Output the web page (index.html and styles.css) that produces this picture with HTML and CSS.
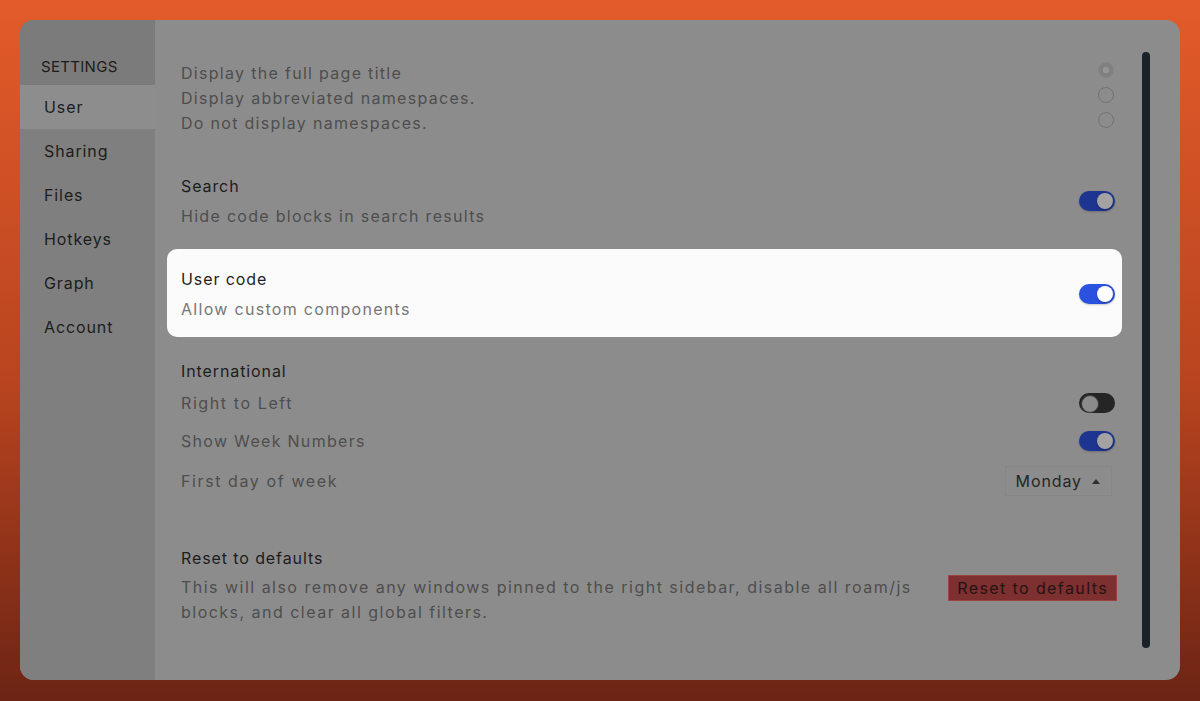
FILE: index.html
```html
<!DOCTYPE html>
<html lang="en">

<head>
    <meta charset="UTF-8">
    <meta name="viewport" content="width=device-width, initial-scale=1.0">
    <title>Settings - User</title>
    <link rel="stylesheet" href="styles.css">
</head>

<body>
    <div class="window">
        <div class="sidebar">
            <div class="side-title">SETTINGS</div>
            <div class="side-item active">User</div>
            <div class="side-item">Sharing</div>
            <div class="side-item">Files</div>
            <div class="side-item">Hotkeys</div>
            <div class="side-item">Graph</div>
            <div class="side-item">Account</div>
        </div>

        <div class="main">
            <div class="list">
                <div class="section radios">
                    <div class="row line">
                        <span class="desc">Display the full page title</span>
                        <span class="radio checked"></span>
                    </div>
                    <div class="row line">
                        <span class="desc">Display abbreviated namespaces.</span>
                        <span class="radio"></span>
                    </div>
                    <div class="row line">
                        <span class="desc">Do not display namespaces.</span>
                        <span class="radio"></span>
                    </div>
                </div>

                <div class="section search">
                    <div class="row">
                        <div>
                            <div class="title">Search</div>
                            <div class="desc">Hide code blocks in search results</div>
                        </div>
                        <span class="toggle on"></span>
                    </div>
                </div>

                <div class="section card">
                    <div class="row">
                        <div>
                            <div class="title">User code</div>
                            <div class="desc">Allow custom components</div>
                        </div>
                        <span class="toggle on bright"></span>
                    </div>
                </div>

                <div class="section intl">
                    <div class="title">International</div>
                    <div class="row opt rtl">
                        <span class="desc">Right to Left</span>
                        <span class="toggle off"></span>
                    </div>
                    <div class="row opt weeks">
                        <span class="desc">Show Week Numbers</span>
                        <span class="toggle on"></span>
                    </div>
                    <div class="row opt firstday">
                        <span class="desc">First day of week</span>
                        <span class="select">Monday <span class="caret"></span></span>
                    </div>
                </div>

                <div class="section reset">
                    <div class="title">Reset to defaults</div>
                    <div class="reset-row">
                        <div class="desc long">This will also remove any windows pinned to the right sidebar, disable all roam/js blocks, and clear all global filters.</div>
                        <button class="reset-btn">Reset to defaults</button>
                    </div>
                </div>
            </div>
            <div class="scrollbar"></div>
        </div>
    </div>
</body>

</html>
```

FILE: styles.css
```css
* {
    margin: 0px;
    padding: 0px;
    box-sizing: border-box;
}

body {
    height: 701px;
    padding: 20px;
    background: linear-gradient(180deg, #e35b2a 0%, #b8441f 55%, #6c2414 100%);
    font-family: Inter, "Noto Sans", sans-serif;
    font-size: 16px;
    letter-spacing: 0.9px;
    overflow: hidden;
}

.window {
    height: 660px;
    display: flex;
    background-color: #8c8c8c;
    border-radius: 14px;
    overflow: hidden;
}

/* sidebar */

.sidebar {
    width: 135px;
    background-color: #7f7f7f;
}

.side-title {
    height: 65px;
    padding: 35px 0 0 21px;
    background-color: #7b7b7b;
    color: #1c1c1c;
    font-size: 15px;
    letter-spacing: 0.3px;
    line-height: 24px;
}

.side-item {
    height: 44px;
    line-height: 44px;
    padding-left: 24px;
    color: #1c1c1c;
}

.side-item.active {
    background-color: #8d8d8d;
}

/* main area */

.main {
    flex: 1;
    display: flex;
    gap: 20px;
    padding: 0 30px 0 12px;
}

.list {
    flex: 1;
    padding-top: 40px;
}

.scrollbar {
    width: 8px;
    margin-top: 32px;
    height: 596px;
    border-radius: 4px;
    background-color: #1b2129;
}

.row {
    display: flex;
    justify-content: space-between;
    align-items: center;
}

.section {
    padding: 0 7px 0 14px;
}

.title {
    line-height: 24px;
    color: #1c1c1c;
}

.desc {
    line-height: 24px;
    color: #4e4e4e;
    letter-spacing: 1.3px;
}

.line {
    height: 25px;
}

.search {
    margin-top: 39px;
}

.search .desc,
.card .desc {
    margin-top: 6px;
}

.card {
    margin-top: 21px;
    padding-top: 18px;
    padding-bottom: 16px;
    background-color: #fbfbfb;
    border-radius: 10px;
}

.card .title {
    color: #1f1f1f;
}

.card .desc {
    color: #777777;
}

.intl {
    margin-top: 22px;
}

.rtl {
    margin-top: 8px;
}

.rtl .desc,
.firstday .desc {
    letter-spacing: 1.6px;
}

.weeks {
    margin-top: 14px;
}

.firstday {
    margin-top: 13px;
    height: 30px;
}

.reset {
    margin-top: 50px;
}

.reset-row {
    display: flex;
    justify-content: space-between;
    align-items: flex-start;
    margin-top: 5px;
}

.desc.long {
    width: 760px;
    line-height: 25px;
    letter-spacing: 1.48px;
}

.reset-btn {
    margin-right: -2px;
    padding: 0 8px;
    height: 26px;
    background-color: #7e2f2f;
    border: 1px solid #9c4040;
    color: #241414;
    font-family: Inter, "Noto Sans", sans-serif;
    font-size: 16px;
    letter-spacing: 1.4px;
}

/* controls */

.radio {
    width: 16px;
    height: 16px;
    margin: 0 1px 6px 0;
    border-radius: 50%;
    border: 1px solid #727272;
}

.radio.checked {
    border-color: #868686;
    background: radial-gradient(circle, #959595 0 3px, #808080 3.5px);
}

.toggle {
    position: relative;
    width: 36px;
    height: 20px;
    border-radius: 10px;
}

.toggle::after {
    content: "";
    position: absolute;
    top: 2px;
    width: 16px;
    height: 16px;
    border-radius: 50%;
}

.toggle.on {
    background-color: #1d3590;
    box-shadow: 0 1px 2px rgba(0, 0, 0, 0.2);
}

.toggle.on::after {
    right: 2px;
    background-color: #a3a3a3;
    box-shadow: 0 1px 2px rgba(0, 0, 0, 0.3);
}

.toggle.bright {
    background-color: #2b52df;
}

.toggle.bright::after {
    background-color: #ffffff;
}

.toggle.off {
    background-color: #252525;
}

.toggle.off::after {
    left: 2px;
    background-color: #8b8b8b;
    border: 1px solid #3a3a3a;
}

.select {
    display: flex;
    align-items: center;
    gap: 10px;
    height: 30px;
    padding: 0 11px 0 10px;
    margin-right: 3px;
    border: 1px solid #868686;
    color: #262626;
}

.caret {
    width: 0;
    height: 0;
    border-left: 4px solid transparent;
    border-right: 4px solid transparent;
    border-bottom: 5px solid #2e2e2e;
}
```
